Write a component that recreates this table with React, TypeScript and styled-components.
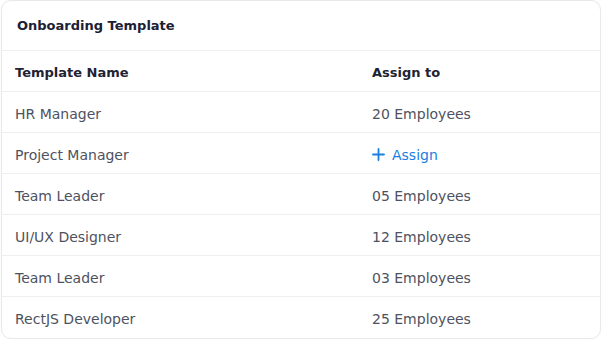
import styled, { createGlobalStyle } from 'styled-components';

const GlobalStyle = createGlobalStyle`
  html, body {
    margin: 0;
    padding: 0;
    background: #ffffff;
  }
  body {
    font-family: 'DejaVu Sans', 'Noto Sans', sans-serif;
  }
`;

interface Template {
  name: string;
  employees: number | null;
}

const templates: Template[] = [
  { name: 'HR Manager', employees: 20 },
  { name: 'Project Manager', employees: null },
  { name: 'Team Leader', employees: 5 },
  { name: 'UI/UX Designer', employees: 12 },
  { name: 'Team Leader', employees: 3 },
  { name: 'RectJS Developer', employees: 25 },
];

const App = () => {
  return (
    <>
      <GlobalStyle />
      <Page>
        <Card>
          <CardHeader>
            <Title>Onboarding Template</Title>
          </CardHeader>
          <Table>
            <HeadRow>
              <HeadCell>Template Name</HeadCell>
              <HeadCell>Assign to</HeadCell>
            </HeadRow>
            {templates.map((t, i) => (
              <Row key={i} $last={i === templates.length - 1}>
                <Cell>{t.name}</Cell>
                {t.employees === null ? (
                  <AssignLink>
                    <svg width='13' height='13' viewBox='0 0 13 13'>
                      <path
                        d='M6.5 1v11M1 6.5h11'
                        stroke='currentColor'
                        strokeWidth='1.8'
                        strokeLinecap='round'
                      />
                    </svg>
                    Assign
                  </AssignLink>
                ) : (
                  <Cell>{String(t.employees).padStart(2, '0')} Employees</Cell>
                )}
              </Row>
            ))}
          </Table>
        </Card>
      </Page>
    </>
  );
};

export default App;

const Page = styled.div`
  padding: 0 1px 1px 1px;
  width: 602px;
  height: 340px;
  box-sizing: border-box;
`;
const Card = styled.div`
  height: 100%;
  box-sizing: border-box;
  border: 1px solid #e9e9e9;
  border-radius: 10px;
  background: #ffffff;
  overflow: hidden;
  box-shadow: 0 0 2px rgba(0, 0, 0, 0.04);
`;
const CardHeader = styled.div`
  height: 49px;
  display: flex;
  align-items: center;
  padding-left: 15px;
  border-bottom: 1px solid #efefef;
`;
const Title = styled.h2`
  margin: 0;
  font-size: 13px;
  font-weight: 700;
  color: #1c2035;
`;
const Table = styled.div`
  display: flex;
  flex-direction: column;
`;
const HeadRow = styled.div`
  display: grid;
  grid-template-columns: 357px 1fr;
  height: 41px;
  box-sizing: border-box;
  padding: 3px 0 0 13px;
  align-items: center;
  border-bottom: 1px solid #efefef;
`;
const HeadCell = styled.div`
  font-size: 13px;
  font-weight: 600;
  color: #1f2333;
`;
const Row = styled.div<{ $last?: boolean }>`
  display: grid;
  grid-template-columns: 357px 1fr;
  height: 41px;
  box-sizing: border-box;
  padding: 3px 0 0 13px;
  align-items: center;
  border-bottom: ${(p) => (p.$last ? 'none' : '1px solid #efefef')};
`;
const Cell = styled.div`
  font-size: 14px;
  color: #4e5260;
`;
const AssignLink = styled.a`
  display: inline-flex;
  align-items: center;
  gap: 7px;
  font-size: 14px;
  color: #1a7fe0;
  cursor: pointer;
`;
